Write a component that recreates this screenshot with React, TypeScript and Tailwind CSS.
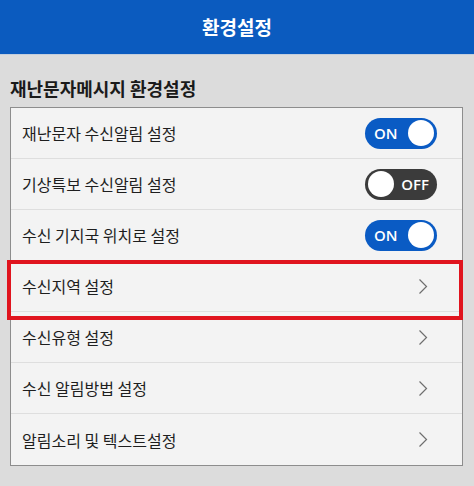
import React from 'react';

const font = { fontFamily: '"Noto Sans CJK KR", "Noto Sans", sans-serif' };

type Row = { label: string; toggle?: 'on' | 'off' };

const rows: Row[] = [
  { label: '재난문자 수신알림 설정', toggle: 'on' },
  { label: '기상특보 수신알림 설정', toggle: 'off' },
  { label: '수신 기지국 위치로 설정', toggle: 'on' },
  { label: '수신지역 설정' },
  { label: '수신유형 설정' },
  { label: '수신 알림방법 설정' },
  { label: '알림소리 및 텍스트설정' },
];

const Toggle = ({ on }: { on: boolean }) =>
  on ? (
    <div className="flex items-center justify-between w-[72px] h-[31px] rounded-full bg-[#0a5bc4] pl-[9px] pr-[3px]">
      <span className="text-white text-[15px] font-semibold leading-none" style={{ fontFamily: '"Open Sans", "Liberation Sans", sans-serif' }}>ON</span>
      <span className="w-[26px] h-[26px] rounded-full bg-white" />
    </div>
  ) : (
    <div className="flex items-center justify-between w-[72px] h-[31px] rounded-full bg-[#3b3b3b] pl-[3px] pr-[8px]">
      <span className="w-[26px] h-[26px] rounded-full bg-white" />
      <span className="text-white text-[15px] font-semibold leading-none" style={{ fontFamily: '"Open Sans", "Liberation Sans", sans-serif' }}>OFF</span>
    </div>
  );

const Chevron = () => (
  <svg width="10" height="17" viewBox="0 0 10 17" className="mr-[34px]">
    <polyline points="1.5,1.5 8.5,8.5 1.5,15.5" fill="none" stroke="#6e6e6e" strokeWidth="1.2" />
  </svg>
);

export default function App() {
  return (
    <div className="w-[474px] h-[486px] bg-[#dcdcdc] relative overflow-hidden" style={font}>
      {/* Header */}
      <div className="h-[55px] bg-[#0b5bbf] border-b border-[#c3cedd] flex items-center justify-center">
        <span className="text-white text-[19px] font-bold">환경설정</span>
      </div>

      <div className="px-[10px] pr-[11px]">
        <div className="h-[52px] flex items-center pt-[14px]">
          <span className="text-[18px] font-bold text-[#1a1a1a]">재난문자메시지 환경설정</span>
        </div>

        {/* Card */}
        <div className="border border-[#8d8d8d] bg-[#f3f3f3]">
          {rows.map((row, i) => (
            <div
              key={row.label}
              className={`h-[51px] flex items-center justify-between pl-[11px] ${
                i < rows.length - 1 ? 'border-b border-[#dedede]' : ''
              } ${row.toggle ? 'pr-[25px]' : ''}`}
            >
              <span className="text-[16px] text-[#1e1e1e]">{row.label}</span>
              {row.toggle ? <Toggle on={row.toggle === 'on'} /> : <Chevron />}
            </div>
          ))}
        </div>
      </div>

      {/* Highlight */}
      <div className="absolute left-[7px] top-[260px] w-[456px] h-[60px] border-[4px] border-[#e0141e] pointer-events-none" />
    </div>
  );
}
